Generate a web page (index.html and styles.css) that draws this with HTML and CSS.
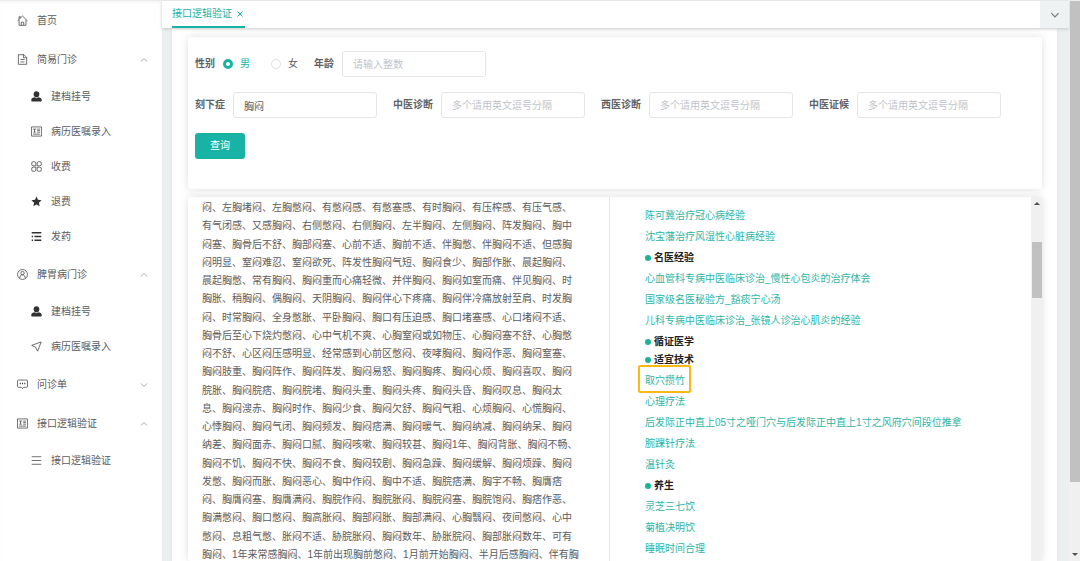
FILE: index.html
```html
<!DOCTYPE html>
<html lang="zh-CN">
<head>
<meta charset="utf-8">
<title>接口逻辑验证</title>
<link rel="stylesheet" href="styles.css">
</head>
<body>
<svg class="sprite" aria-hidden="true">
  <symbol id="i-home" viewBox="0 0 16 16"><path d="M.8 8.500 8 1.500l7.200 7M3 7v8h10V7M6.200 15v-4.500h3.600V15M3 6V2.500h2V4"/></symbol>
  <symbol id="i-doc" viewBox="0 0 16 16"><path d="M2 1h8l4 4v10H2zM9.500 1v4.500H14M5 8h6M5 11.500h6"/></symbol>
  <symbol id="i-user" viewBox="0 0 16 16"><path class="solid" d="M8 .5c2.500 0 4.200 1.800 4.200 4.200 0 1.600-.8 3.100-1.900 3.900L8 9.400 5.700 8.600C4.600 7.800 3.800 6.300 3.800 4.700 3.800 2.300 5.500.5 8 .5zM4.600 9 8 10.400 11.400 9c2.600.6 4.300 2 4.300 4.400 0 1.200-.7 1.900-1.700 1.900H2c-1 0-1.700-.7-1.700-1.900C.3 11 2 9.600 4.600 9z"/></symbol>
  <symbol id="i-card" viewBox="0 0 16 16"><path d="M.8 1.300h14.400v13.400H.8zM3 4.500h4.500M5.200 4.500V9M3.500 9h3.500M9 4.500h4M9 6.700h4M9 9h4M3 11.800h10"/></symbol>
  <symbol id="i-menu" viewBox="0 0 16 16"><path d="M7 7H3.500a2.500 2.500 0 0 1-2.500-3V3a2 2 0 0 1 2-2h2a2 2 0 0 1 2 2zM9 7h3.500A2.500 2.500 0 0 0 15 4V3a2 2 0 0 0-2-2h-2a2 2 0 0 0-2 2zM7 9H3.500A2.500 2.500 0 0 0 1 12v1a2 2 0 0 0 2 2h2a2 2 0 0 0 2-2zM9 9h3.500a2.500 2.500 0 0 1 2.500 3v1a2 2 0 0 1-2 2h-2a2 2 0 0 1-2-2z"/></symbol>
  <symbol id="i-star" viewBox="0 0 16 16"><path class="solid" d="m8 .8 2.200 4.800 5.200.6-3.900 3.500 1.100 5.200L8 12.300l-4.600 2.600 1.100-5.200L.6 6.200l5.200-.6z"/></symbol>
  <symbol id="i-list" viewBox="0 0 16 16"><path class="heavy" d="M1 2.500h14M1 8h2M5 8h10M1 13.500h2M5 13.500h10"/></symbol>
  <symbol id="i-avatar" viewBox="0 0 16 16"><circle cx="8" cy="8" r="7.200"/><circle cx="8" cy="6" r="2.500"/><path d="M4 13.500c0-3 1.500-5 4-5s4 2 4 5"/></symbol>
  <symbol id="i-send" viewBox="0 0 16 16"><path d="M14.800 1.400 1 6.300l5.800 2.900 2.800 5.600z"/></symbol>
  <symbol id="i-chat" viewBox="0 0 16 16"><path d="M2 1.500h12c.8 0 1.300.5 1.300 1.300v8c0 .8-.5 1.300-1.300 1.300H9.500L8 14l-1.500-1.900H2c-.8 0-1.300-.5-1.300-1.300v-8C.7 2 1.200 1.500 2 1.500z"/><path class="heavy" d="M4 6.500h1.500M7.300 6.500h1.500M10.600 6.500h1.500"/></symbol>
  <symbol id="i-bars" viewBox="0 0 16 16"><path d="M1 2.500h14M1 8h14M1 13.500h14"/></symbol>
  <symbol id="i-up" viewBox="0 0 10 10"><path d="M2 6.500l3-3 3 3"/></symbol>
  <symbol id="i-down" viewBox="0 0 10 10"><path d="M2 3.500l3 3 3-3"/></symbol>
  <symbol id="i-close" viewBox="0 0 10 10"><path d="m2.500 2.500 5 5M7.500 2.500l-5 5"/></symbol>
</svg>

<div class="app">
  <nav class="sidebar">
    <a class="item" href="#"><svg class="icon"><use href="#i-home"/></svg>首页</a>
    <button class="item" type="button"><svg class="icon"><use href="#i-doc"/></svg>简易门诊<svg class="chevron"><use href="#i-up"/></svg></button>
    <div class="submenu">
      <a class="subitem" href="#"><svg class="icon"><use href="#i-user"/></svg>建档挂号</a>
      <a class="subitem" href="#"><svg class="icon"><use href="#i-card"/></svg>病历医嘱录入</a>
      <a class="subitem" href="#"><svg class="icon"><use href="#i-menu"/></svg>收费</a>
      <a class="subitem" href="#"><svg class="icon"><use href="#i-star"/></svg>退费</a>
      <a class="subitem" href="#"><svg class="icon"><use href="#i-list"/></svg>发药</a>
    </div>
    <button class="item" type="button"><svg class="icon"><use href="#i-avatar"/></svg>脾胃病门诊<svg class="chevron"><use href="#i-up"/></svg></button>
    <div class="submenu">
      <a class="subitem" href="#"><svg class="icon"><use href="#i-user"/></svg>建档挂号</a>
      <a class="subitem" href="#"><svg class="icon"><use href="#i-send"/></svg>病历医嘱录入</a>
    </div>
    <button class="item" type="button"><svg class="icon"><use href="#i-chat"/></svg>问诊单<svg class="chevron"><use href="#i-down"/></svg></button>
    <button class="item" type="button"><svg class="icon"><use href="#i-card"/></svg>接口逻辑验证<svg class="chevron"><use href="#i-up"/></svg></button>
    <div class="submenu">
      <a class="subitem" href="#"><svg class="icon"><use href="#i-bars"/></svg>接口逻辑验证</a>
    </div>
  </nav>

  <div class="workspace">
    <header class="tabbar">
      <a class="tab" href="#">接口逻辑验证<svg class="close"><use href="#i-close"/></svg></a>
      <button class="tabmenu" type="button" aria-label="更多"><svg class="chevron"><use href="#i-down"/></svg></button>
    </header>

    <main class="page">
      <form class="card filter">
        <div class="row">
          <span class="label">性别</span>
          <div class="radios" role="radiogroup" aria-label="性别">
            <label class="radio"><input type="radio" name="sex" checked><span>男</span></label>
            <label class="radio"><input type="radio" name="sex"><span>女</span></label>
          </div>
          <div class="field"><label class="label" for="age">年龄</label><input class="text" id="age" type="text" placeholder="请输入整数"></div>
        </div>
        <div class="row">
          <div class="field"><label class="label" for="symptom">刻下症</label><input class="text" id="symptom" type="text" value="胸闷"></div>
          <div class="field"><label class="label" for="tcm">中医诊断</label><input class="text" id="tcm" type="text" placeholder="多个请用英文逗号分隔"></div>
          <div class="field"><label class="label" for="western">西医诊断</label><input class="text" id="western" type="text" placeholder="多个请用英文逗号分隔"></div>
          <div class="field"><label class="label" for="syndrome">中医证候</label><input class="text" id="syndrome" type="text" placeholder="多个请用英文逗号分隔"></div>
        </div>
        <div class="row"><button class="submit" type="button">查询</button></div>
      </form>

      <section class="card results">
        <div class="symptoms">
          <span>闷、左胸堵闷、左胸憋闷、有憋闷感、有憋塞感、有时胸闷、有压榨感、有压气感、</span>
          <span>有气闭感、又感胸闷、右侧憋闷、右侧胸闷、左半胸闷、左侧胸闷、阵发胸闷、胸中</span>
          <span>闷塞、胸骨后不舒、胸部闷塞、心前不适、胸前不适、伴胸憋、伴胸闷不适、但感胸</span>
          <span>闷明显、窒闷难忍、窒闷欲死、阵发性胸闷气短、胸闷食少、胸部作胀、晨起胸闷、</span>
          <span>晨起胸憋、常有胸闷、胸闷重而心痛轻微、并伴胸闷、胸闷如窒而痛、伴见胸闷、时</span>
          <span>胸胀、稍胸闷、偶胸闷、天阴胸闷、胸闷伴心下疼痛、胸闷伴冷痛放射至肩、时发胸</span>
          <span>闷、时常胸闷、全身憋胀、平卧胸闷、胸口有压迫感、胸口堵塞感、心口堵闷不适、</span>
          <span>胸骨后至心下烧灼憋闷、心中气机不爽、心胸窒闷或如物压、心胸闷塞不舒、心胸憋</span>
          <span>闷不舒、心区闷压感明显、经常感到心前区憋闷、夜哮胸闷、胸闷作恶、胸闷窒塞、</span>
          <span>胸闷肢重、胸闷阵作、胸闷阵发、胸闷易怒、胸闷胸疼、胸闷心烦、胸闷喜叹、胸闷</span>
          <span>脘胀、胸闷脘痞、胸闷脘堵、胸闷头重、胸闷头疼、胸闷头昏、胸闷叹息、胸闷太</span>
          <span>息、胸闷溲赤、胸闷时作、胸闷少食、胸闷欠舒、胸闷气粗、心烦胸闷、心慌胸闷、</span>
          <span>心悸胸闷、胸闷气闭、胸闷频发、胸闷痞满、胸闷暖气、胸闷纳减、胸闷纳呆、胸闷</span>
          <span>纳差、胸闷面赤、胸闷口腻、胸闷咳嗽、胸闷较甚、胸闷1年、胸闷背胀、胸闷不畅、</span>
          <span>胸闷不饥、胸闷不快、胸闷不食、胸闷较剧、胸闷急躁、胸闷缓解、胸闷烦躁、胸闷</span>
          <span>发憋、胸闷而胀、胸闷恶心、胸中作闷、胸中不适、胸脘痞满、胸宇不畅、胸膺痞</span>
          <span>闷、胸膺闷塞、胸膺满闷、胸脘作闷、胸脘胀闷、胸脘闷塞、胸脘饱闷、胸痞作恶、</span>
          <span>胸满憋闷、胸口憋闷、胸高胀闷、胸部闷胀、胸部满闷、心胸翳闷、夜间憋闷、心中</span>
          <span>憋闷、息粗气憋、胀闷不适、胁脘胀闷、胸闷数年、胁胀脘闷、胸部胀闷数年、可有</span>
          <span>胸闷、1年来常感胸闷、1年前出现胸前憋闷、1月前开始胸闷、半月后感胸闷、伴有胸</span>
        </div>
        <div class="knowledge">
          <ul>
            <li><a href="#">陈可冀治疗冠心病经验</a></li>
            <li><a href="#">沈宝藩治疗风湿性心脏病经验</a></li>
          </ul>
          <h3>名医经验</h3>
          <ul>
            <li><a href="#">心血管科专病中医临床诊治_慢性心包炎的治疗体会</a></li>
            <li><a href="#">国家级名医秘验方_豁痰宁心汤</a></li>
            <li><a href="#">儿科专病中医临床诊治_张镜人诊治心肌炎的经验</a></li>
          </ul>
          <h3>循证医学</h3>
          <h3>适宜技术</h3>
          <ul>
            <li><a class="marked" href="#">取穴攒竹</a></li>
            <li><a href="#">心理疗法</a></li>
            <li><a href="#">后发际正中直上05寸之哑门穴与后发际正中直上1寸之风府穴间段位推拿</a></li>
            <li><a href="#">腕踝针疗法</a></li>
            <li><a href="#">温针灸</a></li>
          </ul>
          <h3>养生</h3>
          <ul>
            <li><a href="#">灵芝三七饮</a></li>
            <li><a href="#">菊植决明饮</a></li>
            <li><a href="#">睡眠时间合理</a></li>
          </ul>
        </div>
        <div class="scroll inner"><i class="arrow-up"></i><i class="thumb"></i></div>
      </section>
    </main>
  </div>

  <div class="scroll outer"><i class="thumb"></i><i class="arrow-down"></i></div>
</div>
</body>
</html>
```
FILE: styles.css
```css
* { box-sizing: border-box; }

body {
  margin: 0;
  height: 100vh;
  overflow: hidden;
  background: #fff;
  color: #5a5c60;
  font: 10px/18px "Liberation Sans", "Noto Sans CJK SC", sans-serif;
}

a { color: inherit; text-decoration: none; }
button, input { font: inherit; color: inherit; }
button { border: 0; background: none; cursor: pointer; }
ul, h3 { margin: 0; padding: 0; }
ul { list-style: none; }

.sprite { display: none; }
svg { fill: none; stroke: currentColor; stroke-width: 1; }
.solid { fill: currentColor; stroke: none; }
.heavy { stroke-width: 2; }
.icon { width: 11px; height: 11px; flex: none; color: #303133; }
.chevron { width: 10px; height: 10px; color: #a5a8ad; }

.app { display: flex; height: 100%; border-top: 1px solid #ededee; }

/* Sidebar */
.sidebar { width: 162px; flex: none; box-shadow: inset 0 2px 2px #f7f7f7; }
.item, .subitem { display: flex; align-items: center; width: 100%; text-align: left; }
.item { height: 39px; padding: 0 13px 0 17px; gap: 9px; }
.item .chevron { margin-left: auto; }
.subitem { height: 35px; padding: 0 0 0 31px; gap: 9px; }
.submenu { padding-bottom: 1px; }

/* Tabs */
.workspace { flex: 1; min-width: 0; display: flex; flex-direction: column; background: #ebeff0; }
.tabbar {
  display: flex;
  justify-content: space-between;
  height: 27px;
  flex: none;
  padding-left: 10px;
  background: #fff;
  box-shadow: 0 1px 3px #c8c8c8;
  z-index: 1;
}
.tab { display: flex; align-items: center; gap: 3px; color: #18b3a4; border-bottom: 2px solid #18b3a4; }
.close { width: 10px; height: 10px; }
.tabmenu { display: grid; place-items: center; width: 29px; padding: 0; background: #eff2f3; }
.tabmenu .chevron { width: 12px; height: 12px; color: #777; }

/* Page body */
.page {
  flex: 1;
  min-height: 0;
  display: flex;
  flex-direction: column;
  gap: 8px;
  margin: 0 12px 0 10px;
  padding: 9px 15px 0 16px;
  background: #fff;
  overflow: hidden;
  box-shadow: 0 0 4px #dde1e2;
}
.card { background: #fff; border-radius: 3px; box-shadow: 0 0 9px #dfdfdf; }

/* Filter form */
.filter { display: flex; flex-direction: column; gap: 15px; flex: none; padding: 14px 7px 30px; }
.row { display: flex; align-items: center; gap: 16px; }
.field { display: flex; align-items: center; gap: 8px; }
.label { font-weight: 700; color: #606266; }
.row > .label { margin-right: -8px; }
.radios { display: flex; gap: 21px; }
.radio { display: flex; align-items: center; gap: 7px; }
.radio input {
  appearance: none;
  width: 10px;
  height: 10px;
  margin: 0;
  border: 1px solid #dcdfe6;
  border-radius: 50%;
}
.radio input:checked { border: 3px solid #18b3a4; }
.radio input:checked + span { color: #18b3a4; }
.text {
  width: 144px;
  height: 26px;
  padding: 0 10px;
  border: 1px solid #e4e6ea;
  border-radius: 3px;
  background: #fff;
}
.text::placeholder { color: #c0c4cc; opacity: 1; }
.submit { height: 26px; padding: 0 15px; border-radius: 3px; background: #18b3a4; color: #fff; }

/* Results */
.results { flex: 1; min-height: 0; display: flex; overflow: hidden; }
.symptoms {
  flex: 0 0 422px;
  display: flex;
  flex-direction: column;
  justify-content: space-between;
  margin-bottom: -3px;
  padding: 2px 0 0 14px;
  border-right: 1px solid #e8e8e8;
  white-space: nowrap;
}
.knowledge { flex: 1; min-width: 0; padding: 7px 0 0 35px; color: #2bb5a6; white-space: nowrap; }
.knowledge ul { padding: 1px 0 2px; }
.knowledge li { height: 21px; line-height: 21px; }
.knowledge h3 { display: flex; align-items: center; gap: 3px; font-size: 10px; color: #222; }
.knowledge h3::before { content: ""; width: 6px; height: 6px; border-radius: 50%; background: #1db295; }
.marked { position: relative; }
.marked::after {
  content: "";
  position: absolute;
  inset: -10px -6px -7px -7px;
  border: 2px solid #fdb813;
  border-radius: 2px;
}

/* Scroll bars */
.scroll { display: flex; flex-direction: column; align-items: center; width: 11px; flex: none; background: #f0f0f0; }
.thumb { width: 10px; background: #c1c1c1; }
.arrow-up, .arrow-down { border: 3px solid transparent; }
.arrow-up { border-top: 0; border-bottom-color: #505050; }
.arrow-down { border-bottom: 0; border-top-color: #505050; }
.inner { gap: 37px; padding-top: 5px; }
.inner .thumb { height: 56px; }
.outer { justify-content: space-between; padding-bottom: 5px; }
.outer .thumb { height: 481px; }
```
